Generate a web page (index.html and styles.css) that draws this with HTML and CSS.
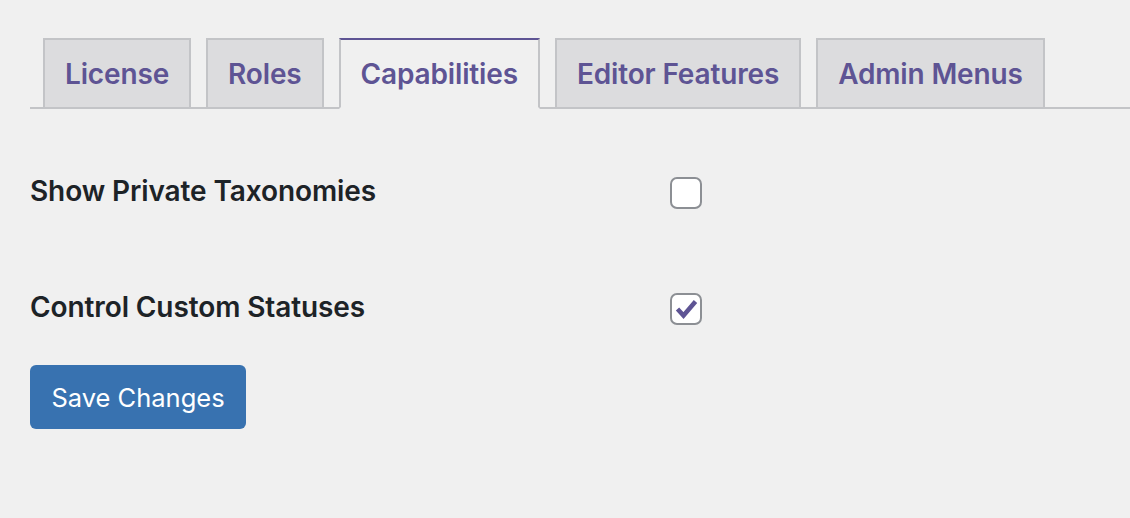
FILE: index.html
```html
<!DOCTYPE html>
<html lang="en">
<head>
<meta charset="utf-8">
<title>Settings</title>
<link rel="stylesheet" href="styles.css">
</head>
<body>
<div class="wrap">
  <nav class="nav-tabs">
    <a class="nav-tab" href="#">License</a>
    <a class="nav-tab" href="#">Roles</a>
    <a class="nav-tab active" href="#">Capabilities</a>
    <a class="nav-tab" href="#">Editor Features</a>
    <a class="nav-tab" href="#">Admin Menus</a>
  </nav>
  <form class="form-table">
    <div class="form-row">
      <div class="label">Show Private Taxonomies</div>
      <span class="checkbox"></span>
    </div>
    <div class="form-row">
      <div class="label">Control Custom Statuses</div>
      <span class="checkbox">
        <svg viewBox="0 0 32 32" width="32" height="32"><polyline points="7.5,16 13.5,22.5 25.5,8.5" fill="none" stroke="#5e5494" stroke-width="4.5" stroke-linecap="butt" stroke-linejoin="miter"/></svg>
      </span>
    </div>
    <button type="button" class="button-primary">Save Changes</button>
  </form>
</div>
</body>
</html>
```
FILE: styles.css
```css
html, body {
  margin: 0;
  padding: 0;
  background: #f0f0f0;
}
body {
  font-family: Inter, "Liberation Sans", sans-serif;
  color: #1d2327;
}
.wrap {
  padding: 38px 0 0 30px;
}
.nav-tabs {
  display: flex;
  gap: 15px;
  padding-left: 13px;
  border-bottom: 2px solid #c3c4c7;
  height: 69px;
}
.nav-tab {
  display: flex;
  align-items: center;
  box-sizing: border-box;
  height: 71px;
  padding: 0 20px 0 20px;
  background: #dcdcde;
  border: 2px solid #c3c4c7;
  border-bottom: 2px solid #c3c4c7;
  color: #5e5494;
  font-size: 28px;
  font-weight: 600;
  text-decoration: none;
  letter-spacing: -0.15px;
}
.nav-tab.active {
  background: #f0f0f0;
  border-top-color: #5e5494;
  border-bottom-color: #f0f0f0;
}
.form-table {
  display: flex;
  flex-direction: column;
  align-items: flex-start;
  padding-top: 68px;
}
.form-row {
  display: grid;
  grid-template-columns: 640px auto;
  align-items: center;
  height: 32px;
  margin-bottom: 84px;
}
.form-row:nth-of-type(2) {
  margin-bottom: 40px;
}
.label {
  font-size: 28px;
  line-height: 28px;
  font-weight: 600;
  padding-bottom: 4px;
  letter-spacing: -0.1px;
}
.checkbox {
  display: block;
  box-sizing: border-box;
  width: 32px;
  height: 32px;
  border: 2px solid #8c8f94;
  border-radius: 7px;
  background: #fff;
  position: relative;
}
.checkbox svg {
  position: absolute;
  left: -2px;
  top: -2px;
}
.button-primary {
  box-sizing: border-box;
  width: 216px;
  height: 64px;
  background: #3872b0;
  border: none;
  border-radius: 6px;
  color: #fff;
  font-family: Inter, "Liberation Sans", sans-serif;
  font-size: 25.5px;
  font-weight: 400;
  padding: 0;
}
```
